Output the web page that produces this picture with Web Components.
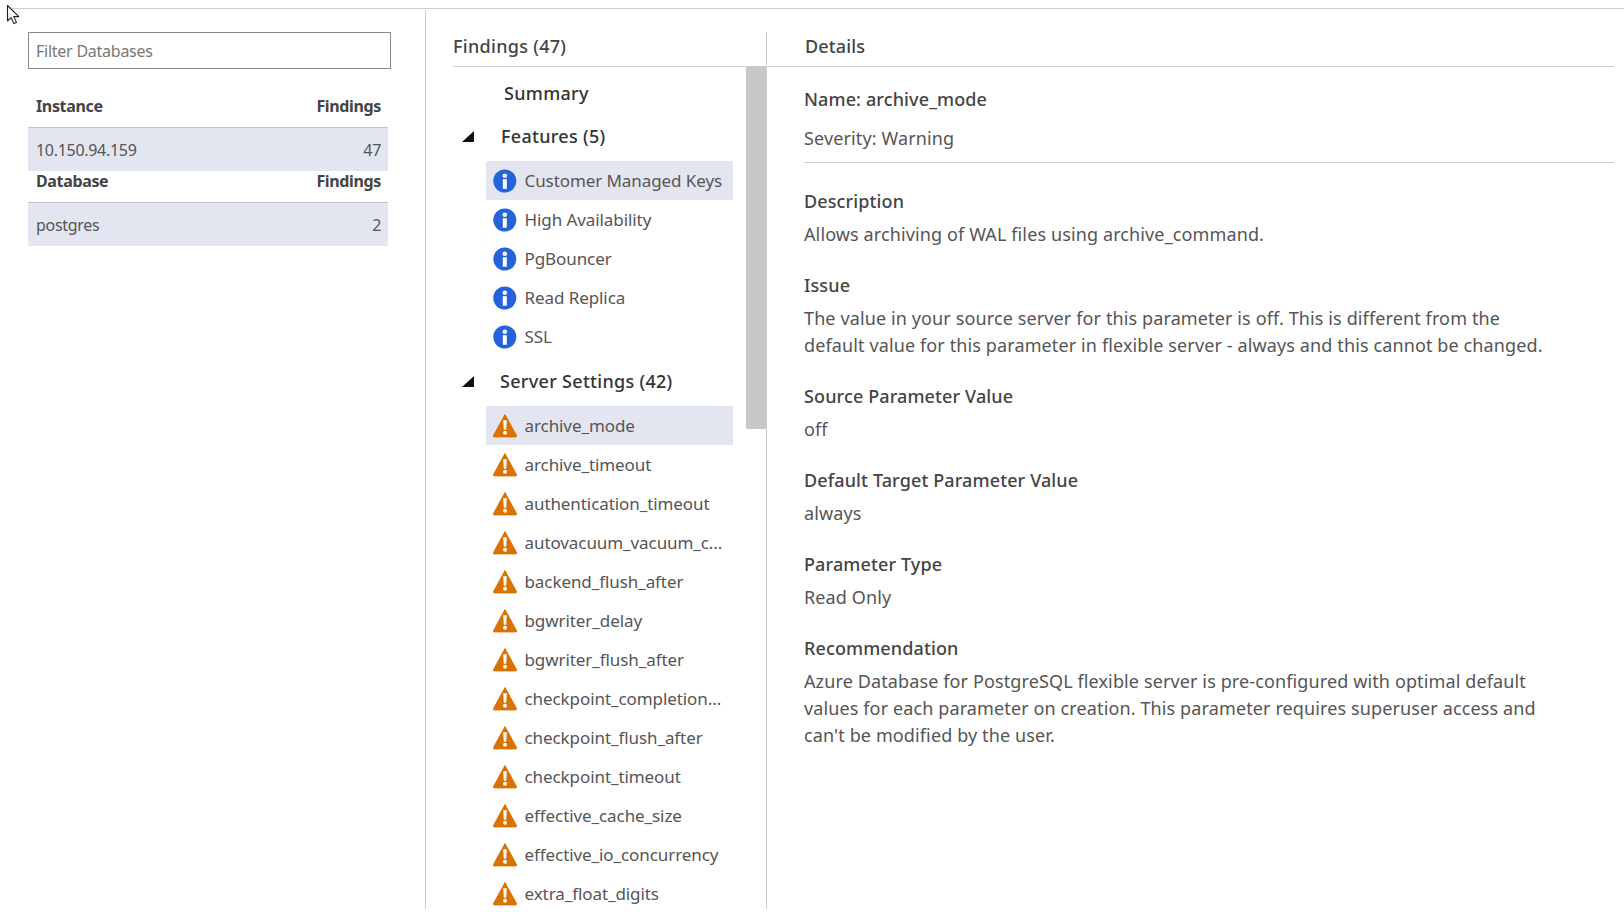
<!DOCTYPE html>
<html>
<head>
<meta charset="utf-8">
<title>Findings</title>
<style>
  html, body { margin: 0; padding: 0; background: #fff; overflow: hidden; }
  body { font-family: "Noto Sans", "Open Sans", sans-serif; font-size: 17px; color: #555; }
</style>
</head>
<body>

<assessment-shell>
  <database-panel slot="left"></database-panel>
  <findings-panel slot="middle">
    <finding-group label="Summary" plain indent="51"></finding-group>
    <finding-group label="Features (5)" indent="48" gap="6">
      <finding-row kind="info" selected>Customer Managed Keys</finding-row>
      <finding-row kind="info">High Availability</finding-row>
      <finding-row kind="info">PgBouncer</finding-row>
      <finding-row kind="info">Read Replica</finding-row>
      <finding-row kind="info">SSL</finding-row>
    </finding-group>
    <finding-group label="Server Settings (42)" indent="47" gap="6">
      <finding-row kind="warning" selected>archive_mode</finding-row>
      <finding-row kind="warning">archive_timeout</finding-row>
      <finding-row kind="warning">authentication_timeout</finding-row>
      <finding-row kind="warning">autovacuum_vacuum_c...</finding-row>
      <finding-row kind="warning">backend_flush_after</finding-row>
      <finding-row kind="warning">bgwriter_delay</finding-row>
      <finding-row kind="warning">bgwriter_flush_after</finding-row>
      <finding-row kind="warning">checkpoint_completion...</finding-row>
      <finding-row kind="warning">checkpoint_flush_after</finding-row>
      <finding-row kind="warning">checkpoint_timeout</finding-row>
      <finding-row kind="warning">effective_cache_size</finding-row>
      <finding-row kind="warning">effective_io_concurrency</finding-row>
      <finding-row kind="warning">extra_float_digits</finding-row>
    </finding-group>
  </findings-panel>
  <details-panel slot="right">
    <detail-section title="Description">Allows archiving of WAL files using archive_command.</detail-section>
    <detail-section title="Issue">The value in your source server for this parameter is off. This is different from the<br>default value for this parameter in flexible server - always and this cannot be changed.</detail-section>
    <detail-section title="Source Parameter Value">off</detail-section>
    <detail-section title="Default Target Parameter Value">always</detail-section>
    <detail-section title="Parameter Type">Read Only</detail-section>
    <detail-section title="Recommendation">Azure Database for PostgreSQL flexible server is pre-configured with optimal default<br>values for each parameter on creation. This parameter requires superuser access and<br>can't be modified by the user.</detail-section>
  </details-panel>
</assessment-shell>

<script>
class AssessmentShell extends HTMLElement {
  constructor() {
    super();
    this.attachShadow({mode: 'open'});
  }
  connectedCallback() {
    this.shadowRoot.innerHTML = `
    <style>
      :host { display: block; position: relative; height: 915px; box-sizing: border-box; padding: 8px 0 6px 12px; }
      .frame { height: 100%; box-sizing: border-box; border-top: 1px solid #ccc; display: grid; grid-template-columns: 414px 341px 1fr; grid-template-rows: minmax(0, 1fr); }
      svg { position: absolute; left: 6px; top: 4px; }
    </style>
    <div class="frame">
      <slot name="left"></slot>
      <slot name="middle"></slot>
      <slot name="right"></slot>
    </div>
    <svg width="15" height="21" viewBox="0 0 15 21">
      <path d="M1.5 1.5 V17 L5.2 13.6 L7.8 19.6 L10.4 18.4 L7.8 12.6 H12.8 Z" fill="#fff" stroke="#222" stroke-width="1.1" stroke-linejoin="round"/>
    </svg>`;
  }
}
customElements.define('assessment-shell', AssessmentShell);

class DatabasePanel extends HTMLElement {
  constructor() {
    super();
    this.attachShadow({mode: 'open'});
  }
  connectedCallback() {
    this.shadowRoot.innerHTML = `
    <style>
      :host { display: block; box-sizing: border-box; padding: 22px 0 0 16px; border-right: 1px solid #ccc; margin-top: 1px; font-size: 16px; letter-spacing: -.2px; }
      input { display: block; width: 363px; height: 37px; box-sizing: border-box; border: 1px solid #8a8a8a; padding: 1px 7px 0; margin: 0; font: inherit; letter-spacing: -.25px; outline: 0; }
      input::placeholder { color: #777; opacity: 1; }
      .tbl { width: 360px; }
      .head { display: flex; justify-content: space-between; padding: 0 7px 0 8px; font-weight: 700; color: #444; }
      .head.first { height: 58px; align-items: flex-end; padding-bottom: 9px; box-sizing: border-box; line-height: 24px; letter-spacing: -.35px; }
      .head.second { height: 31px; line-height: 20px; letter-spacing: -.35px; }
      .row { display: flex; justify-content: space-between; align-items: center; height: 43px; padding: 0 7px 0 8px; background: #e3e6f1; border-top: 1px solid #c4c6cc; color: #555; letter-spacing: -.3px; }
    </style>
    <input placeholder="Filter Databases">
    <div class="tbl">
      <div class="head first"><span>Instance</span><span>Findings</span></div>
      <div class="row"><span>10.150.94.159</span><span>47</span></div>
      <div class="head second"><span>Database</span><span>Findings</span></div>
      <div class="row"><span>postgres</span><span>2</span></div>
    </div>`;
  }
}
customElements.define('database-panel', DatabasePanel);

class FindingsPanel extends HTMLElement {
  constructor() {
    super();
    this.attachShadow({mode: 'open'});
  }
  connectedCallback() {
    this.shadowRoot.innerHTML = `
    <style>
      :host { display: flex; flex-direction: column; box-sizing: border-box; padding: 23px 0 0 27px; min-height: 0; overflow: hidden; }
      h2 { margin: 0; height: 34px; line-height: 28px; font-size: 18px; font-weight: 500; letter-spacing: .3px; color: #444; border-bottom: 1px solid #ccc; }
      .body { flex: 1; display: flex; min-height: 0; border-right: 1px solid #ccc; }
      .list { flex: 1; min-width: 0; overflow: hidden; padding-top: 7px; }
      .track { width: 20px; flex: none; }
      .thumb { height: 362px; background: #c8c8c8; }
    </style>
    <h2>Findings (47)</h2>
    <div class="body">
      <div class="list"><slot></slot></div>
      <div class="track"><div class="thumb"></div></div>
    </div>`;
  }
}
customElements.define('findings-panel', FindingsPanel);

class FindingGroup extends HTMLElement {
  constructor() {
    super();
    this.attachShadow({mode: 'open'});
  }
  connectedCallback() {
    const plain = this.hasAttribute('plain');
    this.shadowRoot.innerHTML = `
    <style>
      :host { display: block; }
      .label { position: relative; height: 38px; line-height: 38px; font-size: 18px; font-weight: 500; letter-spacing: .3px; color: #333; padding-left: ${this.getAttribute('indent')}px; }
      svg { position: absolute; left: 9px; top: 14px; }
      .rows { padding: ${this.getAttribute('gap') || 0}px 0 ${plain ? 5 : 6}px 33px; }
    </style>
    <div class="label">${plain ? '' : '<svg width="12" height="11" viewBox="0 0 12 11"><path d="M12 0 V11 H0 Z" fill="#111"/></svg>'}${this.getAttribute('label')}</div>
    <div class="rows"><slot></slot></div>`;
  }
}
customElements.define('finding-group', FindingGroup);

class FindingRow extends HTMLElement {
  constructor() {
    super();
    this.attachShadow({mode: 'open'});
  }
  connectedCallback() {
    const icon = this.getAttribute('kind') === 'info'
      ? `<svg width="24" height="24" viewBox="0 0 24 24"><circle cx="11.8" cy="12" r="11.5" fill="#2563dc"/><circle cx="11.8" cy="6.8" r="2.3" fill="#fff"/><rect x="9.8" y="10.2" width="4" height="9.6" fill="#fff"/></svg>`
      : `<svg width="24" height="24" viewBox="0 0 24 24"><path d="M12 .6 L23.4 21.4 a1 1 0 0 1 -.8 1.5 H1.4 a1 1 0 0 1 -.8 -1.5 Z" fill="#d97200" stroke="#d97200" stroke-width="1" stroke-linejoin="round"/><path d="M10.2 6.2 H13.8 L13.2 15.8 H10.8 Z" fill="#fff"/><circle cx="12" cy="18.8" r="2" fill="#fff"/></svg>`;
    this.shadowRoot.innerHTML = `
    <style>
      :host { display: flex; align-items: center; width: 247px; height: 39px; padding-left: 7px; box-sizing: border-box; gap: 7.5px; white-space: nowrap; color: #555; letter-spacing: -.08px; }
      :host([selected]) { background: #e3e6f1; }
      svg { flex: none; }
    </style>
    ${icon}<span><slot></slot></span>`;
  }
}
customElements.define('finding-row', FindingRow);

class DetailsPanel extends HTMLElement {
  constructor() {
    super();
    this.attachShadow({mode: 'open'});
  }
  connectedCallback() {
    this.shadowRoot.innerHTML = `
    <style>
      :host { display: block; box-sizing: border-box; padding: 23px 10px 0 0; }
      h2 { margin: 0; height: 34px; line-height: 28px; font-size: 18px; font-weight: 500; letter-spacing: .15px; color: #444; border-bottom: 1px solid #ccc; box-sizing: content-box; padding-left: 38px; position: relative; }
      h2::before { content: ''; position: absolute; left: -1px; top: 0; bottom: 1px; width: 1px; background: #ccc; }
      .content { padding: 19px 0 0 37px; letter-spacing: .12px; }
      .name { line-height: 27px; font-size: 18px; font-weight: 500; color: #444; }
      .severity { line-height: 27px; font-size: 18px; margin-top: 12px; padding-bottom: 10px; border-bottom: 1px solid #ccc; margin-bottom: 25px; }
      .sections { display: flex; flex-direction: column; gap: 24px; }
    </style>
    <h2>Details</h2>
    <div class="content">
      <div class="name">Name: archive_mode</div>
      <div class="severity">Severity: Warning</div>
      <div class="sections"><slot></slot></div>
    </div>`;
  }
}
customElements.define('details-panel', DetailsPanel);

class DetailSection extends HTMLElement {
  constructor() {
    super();
    this.attachShadow({mode: 'open'});
  }
  connectedCallback() {
    this.shadowRoot.innerHTML = `
    <style>
      :host { display: block; font-size: 18px; line-height: 27px; color: #555; }
      h3 { margin: 0 0 6px; font: inherit; font-weight: 500; color: #444; }
    </style>
    <h3>${this.getAttribute('title')}</h3>
    <slot></slot>`;
  }
}
customElements.define('detail-section', DetailSection);
</script>
</body>
</html>
